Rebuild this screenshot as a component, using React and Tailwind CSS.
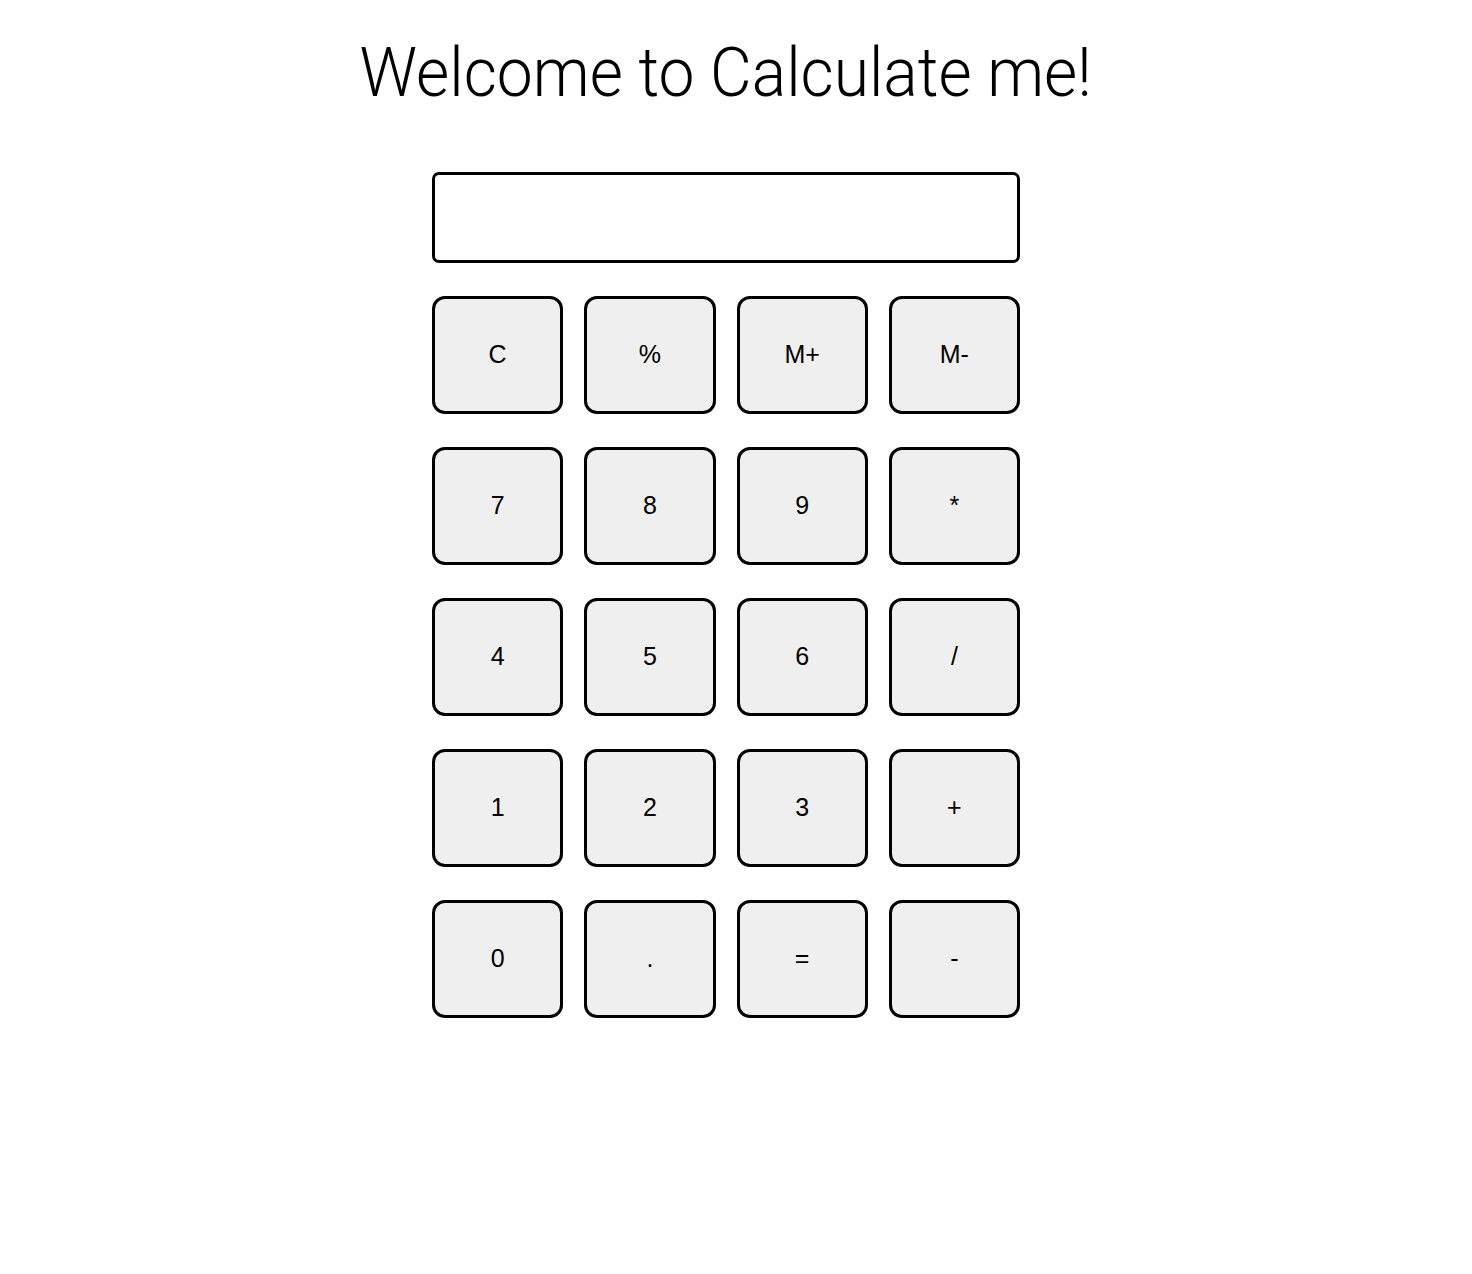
import React from "react";

const keys = ["C", "%", "M+", "M-", "7", "8", "9", "*", "4", "5", "6", "/", "1", "2", "3", "+", "0", ".", "=", "-"];

export default function App() {
  return (
    <div className="min-h-[1274px] bg-white flex flex-col items-center pr-[20px]">
      <h1
        className="mt-[33px] text-[69px] leading-[80px] font-light text-black inline-block scale-x-[0.93] whitespace-nowrap"
        style={{ fontFamily: "Roboto, sans-serif" }}
      >
        Welcome to Calculate me!
      </h1>
      <div className="mt-[59px] w-[588px] flex flex-col gap-[33px]">
        <input
          type="text"
          className="w-full h-[91px] border-[3px] border-black rounded-[7px] bg-white outline-none px-3"
        />
        <div className="grid grid-cols-4 gap-x-[21px] gap-y-[33px]">
          {keys.map((k) => (
            <button
              key={k}
              className="h-[118px] border-[3px] border-black rounded-[13px] bg-[#efefef] text-[25px] text-black flex items-center justify-center"
              style={{ fontFamily: "'Liberation Sans', Arial, sans-serif" }}
            >
              {k}
            </button>
          ))}
        </div>
      </div>
    </div>
  );
}
